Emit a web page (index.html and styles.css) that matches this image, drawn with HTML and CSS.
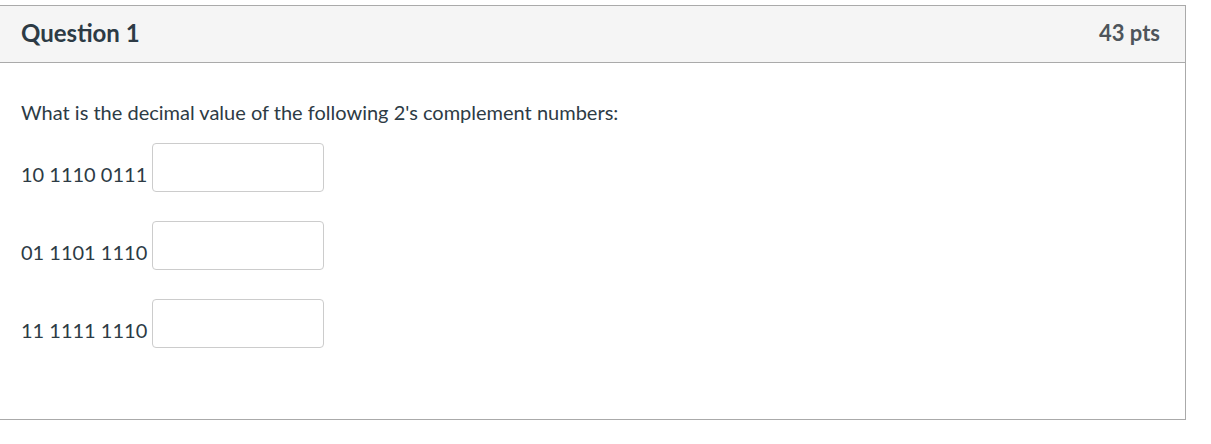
FILE: index.html
```html
<!DOCTYPE html>
<html>
<head>
<meta charset="utf-8">
<link rel="stylesheet" href="styles.css">
</head>
<body>
<div class="card">
  <div class="header">
    <span class="title">Question 1</span>
    <span class="pts">43 pts</span>
  </div>
  <div class="content">
    <p class="prompt">What is the decimal value of the following 2's complement numbers:</p>
    <div class="row"><span class="label">10 1110 0111</span><input class="answer" type="text"></div>
    <div class="row"><span class="label">01 1101 1110</span><input class="answer" type="text"></div>
    <div class="row"><span class="label">11 1111 1110</span><input class="answer" type="text"></div>
  </div>
</div>
</body>
</html>
```
FILE: styles.css
```css
html, body { margin: 0; padding: 0; background: #fff; }
body { font-family: Lato, "Liberation Sans", sans-serif; color: #2d3b45; }
.card {
  margin-top: 5px;
  margin-left: -1px;
  width: 1187px;
  height: 415px;
  box-sizing: border-box;
  border: 1px solid #aaaaaa;
}
.header {
  height: 57px;
  box-sizing: border-box;
  background: #f5f5f5;
  border-bottom: 1px solid #aaaaaa;
  display: flex;
  align-items: center;
  justify-content: space-between;
  padding: 0 25px 3px 21px;
}
.title { font-size: 24px; font-weight: 700; color: #2d3b45; }
.pts { font-size: 22px; font-weight: 700; color: #4e555b; }
.content { padding: 37px 21px 0 21px; }
.prompt { margin: 0 0 19px 0; font-size: 20px; }
.row { display: flex; align-items: flex-end; gap: 5px; margin-bottom: 29px; }
.label { font-size: 20px; padding-bottom: 6px; }
.answer {
  width: 172px;
  height: 49px;
  box-sizing: border-box;
  border: 1px solid #cccccc;
  border-radius: 4px;
  margin: 0;
}
```
